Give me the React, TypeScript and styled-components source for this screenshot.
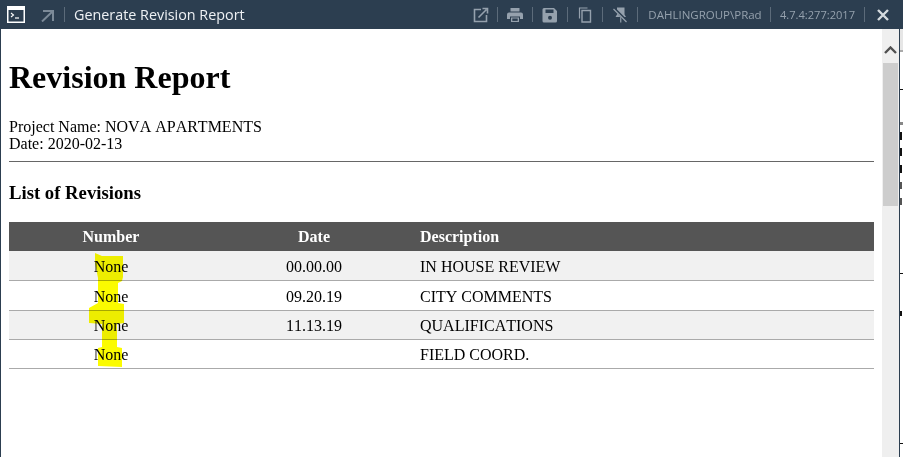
import React from 'react';
import styled, { createGlobalStyle } from 'styled-components';

const GlobalStyle = createGlobalStyle`
  html, body {
    margin: 0;
    padding: 0;
    background: #fff;
  }
`;

const Frame = styled.div`
  width: 903px;
  height: 457px;
  display: flex;
  flex-direction: column;
  overflow: hidden;
`;

const TitleBar = styled.div`
  height: 29px;
  flex: none;
  display: flex;
  align-items: center;
  background-color: #2c3e50;
  font-family: "Open Sans", "Noto Sans", sans-serif;
`;

const AppIcon = styled.svg`
  width: 18px;
  height: 17px;
  margin-left: 7px;
  display: block;
`;

const PopIcon = styled.svg`
  width: 14px;
  height: 14px;
  margin-left: 16px;
  display: block;
`;

const Title = styled.div`
  color: #eef1f4;
  font-size: 14.35px;
  margin-left: 9px;
  white-space: nowrap;
`;

const Tools = styled.div`
  margin-left: auto;
  display: flex;
  align-items: center;
  padding-right: 2px;
`;

const Separator = styled.div<{ $left?: number }>`
  width: 1px;
  height: 15px;
  background-color: #5c6b7a;
  margin-left: ${(p) => p.$left ?? 0}px;
`;

const ToolIcon = styled.svg<{ $width: number }>`
  width: ${(p) => p.$width}px;
  height: 16px;
  display: block;
`;

const ToolSlot = styled.div<{ $width: number }>`
  width: ${(p) => p.$width}px;
  display: flex;
  justify-content: center;
`;

const Info = styled.div<{ $width: number; $size: number; $nudge?: number }>`
  width: ${(p) => p.$width}px;
  box-sizing: border-box;
  padding-left: ${(p) => p.$nudge ?? 0}px;
  text-align: center;
  color: #95a1ad;
  font-size: ${(p) => p.$size}px;
  white-space: nowrap;
`;

const Body = styled.div`
  flex: 1;
  display: flex;
  min-height: 0;
`;

const Edge = styled.div`
  width: 1px;
  flex: none;
  background-color: #2c3e50;
`;

const Report = styled.div`
  width: 881px;
  flex: none;
  background: #fff;
  box-sizing: border-box;
  padding: 0 8px;
  font-family: "Liberation Serif", "Times New Roman", serif;
  font-size: 16px;
  font-kerning: none;
  color: #000;
`;

const Heading = styled.h1`
  font-size: 32px;
  line-height: 37px;
  font-weight: bold;
  margin: 30px 0 22px;
`;

const Meta = styled.div`
  line-height: 17px;
`;

const Rule = styled.hr`
  border: none;
  height: 1px;
  background-color: #666;
  margin: 9px 0 0;
  width: 865px;
`;

const SubHeading = styled.h3`
  font-size: 18.72px;
  line-height: 22px;
  font-weight: bold;
  margin: 20px 0 18px;
`;

const TableWrap = styled.div`
  position: relative;
  width: 865px;
`;

const Table = styled.table`
  width: 865px;
  table-layout: fixed;
  border-collapse: collapse;
`;

const HeadCell = styled.th<{ $width?: number; $left?: boolean }>`
  width: ${(p) => (p.$width ? `${p.$width}px` : 'auto')};
  height: 29px;
  padding: 0 5px;
  box-sizing: border-box;
  background-color: #555;
  color: #fff;
  font-weight: bold;
  text-align: ${(p) => (p.$left ? 'left' : 'center')};
`;

const Row = styled.tr<{ $shaded: boolean }>`
  background-color: ${(p) => (p.$shaded ? '#f1f1f1' : '#fff')};
  border-bottom: 1px solid #aaa;
`;

const Cell = styled.td<{ $left?: boolean; $height: number; $pad: number }>`
  height: ${(p) => p.$height}px;
  padding: ${(p) => p.$pad}px 5px 0;
  box-sizing: border-box;
  text-align: ${(p) => (p.$left ? 'left' : 'center')};
`;

const Highlight = styled.svg`
  position: absolute;
  left: 71px;
  top: 18px;
  width: 60px;
  height: 140px;
  mix-blend-mode: multiply;
  pointer-events: none;
`;

const ScrollTrack = styled.div`
  width: 17px;
  flex: none;
  background-color: #efefef;
  display: flex;
  flex-direction: column;
  align-items: center;
`;

const ScrollArrow = styled.svg`
  width: 13px;
  height: 8px;
  margin-top: 17px;
  display: block;
`;

const ScrollThumb = styled.div`
  width: 15px;
  height: 143px;
  margin-top: 9px;
  background-color: #cdcdcd;
`;

const Divider = styled.div`
  width: 1px;
  flex: none;
  background-color: #2c3e50;
`;

const BehindWindow = styled.div`
  width: 3px;
  flex: none;
  display: flex;
  flex-direction: column;
  background: #fff;
`;

const Scrap = styled.div<{ $top: number; $height: number; $color?: string; $width?: number }>`
  margin-top: ${(p) => p.$top}px;
  height: ${(p) => p.$height}px;
  width: ${(p) => p.$width ?? 3}px;
  background-color: ${(p) => p.$color ?? '#111'};
  flex: none;
`;

const revisions = [
  { number: 'None', date: '00.00.00', description: 'IN HOUSE REVIEW', height: 29, pad: 4 },
  { number: 'None', date: '09.20.19', description: 'CITY COMMENTS', height: 30, pad: 4 },
  { number: 'None', date: '11.13.19', description: 'QUALIFICATIONS', height: 29, pad: 2 },
  { number: 'None', date: '', description: 'FIELD COORD.', height: 29, pad: 2 },
];

const App = () => {
  return (
    <>
      <GlobalStyle />
      <Frame>
        <TitleBar>
          <AppIcon viewBox="0 0 18 17">
            <rect x="0.75" y="0.75" width="16.5" height="15.5" fill="none" stroke="#fff" strokeWidth="1.5" />
            <rect x="1" y="1" width="16" height="3" fill="#fff" />
            <path d="M4 7l2.5 2L4 11" fill="none" stroke="#fff" strokeWidth="1.1" />
            <path d="M8 12h4" stroke="#fff" strokeWidth="1.2" />
          </AppIcon>
          <PopIcon viewBox="0 0 14 14">
            <path d="M2 3h10v10M12 3L1 13.5" fill="none" stroke="#7c8a98" strokeWidth="2" />
          </PopIcon>
          <Separator $left={9} />
          <Title>Generate Revision Report</Title>
          <Tools>
            <ToolSlot $width={32}>
              <ToolIcon $width={16} viewBox="0 0 16 16">
                <path d="M8 2.5H1.5v12h12V8" fill="none" stroke="#95a1ad" strokeWidth="1.6" />
                <path d="M5.5 10.5L13.5 2.5M9.5 1.5h5v5" fill="none" stroke="#95a1ad" strokeWidth="1.6" />
              </ToolIcon>
            </ToolSlot>
            <Separator />
            <ToolSlot $width={34}>
              <ToolIcon $width={16} viewBox="0 0 16 16">
                <path d="M3.5 1h9v3.5h-9z" fill="#95a1ad" />
                <path d="M2 5.5h12a2 2 0 0 1 2 2V12h-3V9.5H3V12H0V7.5a2 2 0 0 1 2-2z" fill="#95a1ad" />
                <path d="M4 10.5h8V15H4z" fill="#95a1ad" />
                <path d="M5.3 11.5h5.4v2.4H5.3z" fill="#2c3e50" />
              </ToolIcon>
            </ToolSlot>
            <Separator />
            <ToolSlot $width={34}>
              <ToolIcon $width={16} viewBox="0 0 16 16">
                <path d="M2 1h10l3 3v10a1.500 1.500 0 0 1-1.500 1.500h-11.500A1.500 1.500 0 0 1 .5 14V2.500A1.500 1.500 0 0 1 2 1z" fill="#95a1ad" />
                <path d="M3.500 2.500h8v3.500h-8z" fill="#2c3e50" />
                <circle cx="8" cy="10.800" r="2" fill="#2c3e50" />
              </ToolIcon>
            </ToolSlot>
            <Separator />
            <ToolSlot $width={34}>
              <ToolIcon $width={14} viewBox="0 0 14 16">
                <path d="M9.500 1H1.500v10.500" fill="none" stroke="#95a1ad" strokeWidth="1.200" />
                <path d="M4 3.500h8.500V15H4z" fill="none" stroke="#95a1ad" strokeWidth="1.400" />
              </ToolIcon>
            </ToolSlot>
            <Separator />
            <ToolSlot $width={34}>
              <ToolIcon $width={15} viewBox="0 0 15 16">
                <path d="M4 .5h7.500v7l1.500 2.500H2.500L4 7.500z" fill="#95a1ad" />
                <path d="M7.750 10v5.500" stroke="#95a1ad" strokeWidth="1.200" />
                <path d="M1 1.500l13 13" stroke="#2c3e50" strokeWidth="2.800" />
                <path d="M.5 2l13 13" stroke="#95a1ad" strokeWidth="1.200" />
              </ToolIcon>
            </ToolSlot>
            <Separator />
            <Info $width={132} $size={11.5} $nudge={2}>DAHLINGROUP\PRad</Info>
            <Separator />
            <Info $width={93} $size={11.1}>4.7.4:277:2017</Info>
            <Separator />
            <ToolSlot $width={36}>
              <ToolIcon $width={12} viewBox="0 0 12 16">
                <path d="M1 3l10 10M11 3L1 13" stroke="#d5dade" strokeWidth="2.400" />
              </ToolIcon>
            </ToolSlot>
          </Tools>
        </TitleBar>
        <Body>
          <Edge />
          <Report>
            <Heading>Revision Report</Heading>
            <Meta>Project Name: NOVA APARTMENTS</Meta>
            <Meta>Date: 2020-02-13</Meta>
            <Rule />
            <SubHeading>List of Revisions</SubHeading>
            <TableWrap>
              <Table>
                <thead>
                  <tr>
                    <HeadCell $width={204}>Number</HeadCell>
                    <HeadCell $width={202}>Date</HeadCell>
                    <HeadCell $left>Description</HeadCell>
                  </tr>
                </thead>
                <tbody>
                  {revisions.map((rev, i) => (
                    <Row key={rev.description} $shaded={i % 2 === 0}>
                      <Cell $height={rev.height} $pad={rev.pad}>{rev.number}</Cell>
                      <Cell $height={rev.height} $pad={rev.pad}>{rev.date}</Cell>
                      <Cell $height={rev.height} $pad={rev.pad} $left>{rev.description}</Cell>
                    </Row>
                  ))}
                </tbody>
              </Table>
              <Highlight viewBox="80 240 60 140">
                <polygon
                  fill="#fbfb00"
                  points="95,253 102,256 123,256 123,277 122,281 118,283 118,303 124,304 124,323 117,324 117,347 122,348 122,367 98,366 98,348 102,347 102,324 89,323 89,308 98,303 98,278 95,263"
                />
              </Highlight>
            </TableWrap>
          </Report>
          <ScrollTrack>
            <ScrollArrow viewBox="0 0 13 8">
              <path d="M1 7l5.500-5.500L12 7" fill="none" stroke="#505050" strokeWidth="2.400" />
            </ScrollArrow>
            <ScrollThumb />
          </ScrollTrack>
          <Divider />
          <BehindWindow>
            <Scrap $top={0} $height={21} $color="#e6e6e6" />
            <Scrap $top={0} $height={2} $color="#aaa" />
            <Scrap $top={37} $height={1} />
            <Scrap $top={32} $height={3} $color="#888" />
            <Scrap $top={7} $height={8} $width={2} />
            <Scrap $top={8} $height={8} $width={2} />
            <Scrap $top={9} $height={8} $width={2} />
            <Scrap $top={9} $height={7} $width={2} $color="#555" />
            <Scrap $top={9} $height={7} $width={2} $color="#555" />
            <Scrap $top={68} $height={1} />
            <Scrap $top={37} $height={5} $width={2} />
            <Scrap $top={127} $height={1} />
          </BehindWindow>
        </Body>
      </Frame>
    </>
  );
};

export default App;
